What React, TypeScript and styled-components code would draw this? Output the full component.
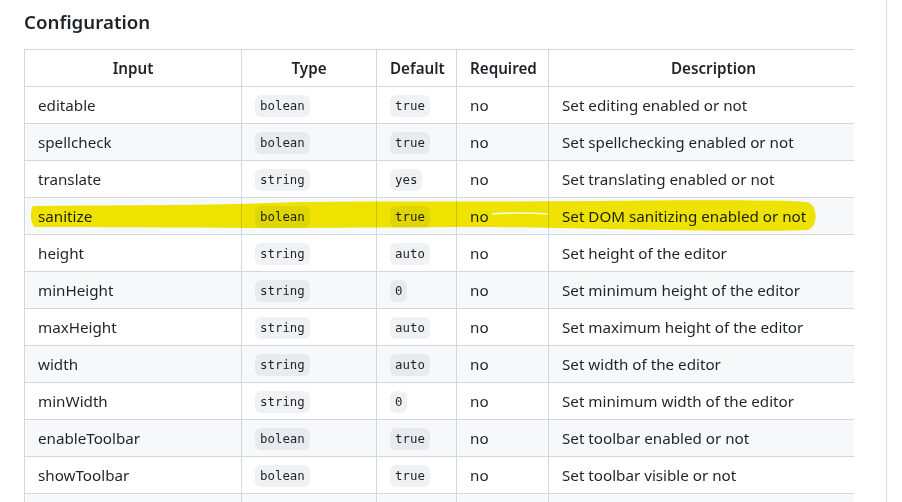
import React from "react";
import styled, { createGlobalStyle } from "styled-components";

const Global = createGlobalStyle`
  html, body { margin: 0; padding: 0; background: #ffffff; }
  body {
    font-family: "Noto Sans", "Open Sans", sans-serif;
    color: #1f2328;
    -webkit-font-smoothing: antialiased;
  }
`;

const Page = styled.div`
  position: relative;
  width: 902px;
  height: 502px;
  overflow: hidden;
  display: flex;
`;

const Main = styled.main`
  flex: none;
  width: 886px;
  padding: 0 32px 0 24px;
  box-sizing: border-box;
`;

const Aside = styled.aside`
  flex: 1;
  border-left: 1px solid #d8dee4;
`;

const Heading = styled.h3`
  margin: 9px 0 14px;
  font-size: 18.7px;
  line-height: 26px;
  font-weight: 600;
`;

const TableWrap = styled.div`
  width: 830px;
  overflow: hidden;
`;

const Table = styled.table`
  border-collapse: collapse;
  border-spacing: 0;
  table-layout: fixed;
  width: 854px;
  font-size: 15.2px;
  line-height: 24px;
`;

const HeadCell = styled.th`
  padding: 6px 13px;
  border: 1px solid #d0d7de;
  font-weight: 600;
  text-align: center;
  height: 24px;
  box-sizing: content-box;
  white-space: nowrap;
`;

const Row = styled.tr<{ $alt: boolean }>`
  height: 37px;
  background: ${(p) => (p.$alt ? "#f6f8fa" : "#ffffff")};
`;

const Cell = styled.td`
  padding: 0 13px;
  border: 1px solid #d0d7de;
  height: 36px;
  max-height: 36px;
  box-sizing: border-box;
  white-space: nowrap;
  overflow: hidden;
`;

const Code = styled.code`
  display: inline-block;
  vertical-align: middle;
  font-family: "DejaVu Sans Mono", "Liberation Mono", monospace;
  font-size: 12.4px;
  line-height: 16px;
  padding: 3px 5px;
  margin-top: -2px;
  border-radius: 6px;
  background: rgba(175, 184, 193, 0.2);
`;

const Marker = styled.svg`
  position: absolute;
  left: 0;
  top: 0;
  pointer-events: none;
`;

const rows: [string, string, string, string, string][] = [
  ["editable", "bolean", "true", "no", "Set editing enabled or not"],
  ["spellcheck", "bolean", "true", "no", "Set spellchecking enabled or not"],
  ["translate", "string", "yes", "no", "Set translating enabled or not"],
  ["sanitize", "bolean", "true", "no", "Set DOM sanitizing enabled or not"],
  ["height", "string", "auto", "no", "Set height of the editor"],
  ["minHeight", "string", "0", "no", "Set minimum height of the editor"],
  ["maxHeight", "string", "auto", "no", "Set maximum height of the editor"],
  ["width", "string", "auto", "no", "Set width of the editor"],
  ["minWidth", "string", "0", "no", "Set minimum width of the editor"],
  ["enableToolbar", "bolean", "true", "no", "Set toolbar enabled or not"],
  ["showToolbar", "bolean", "true", "no", "Set toolbar visible or not"],
];

export default function App() {
  return (
    <>
      <Global />
      <Page>
        <Main>
          <Heading>Configuration</Heading>
          <TableWrap>
            <Table>
              <colgroup>
                <col style={{ width: 217 }} />
                <col style={{ width: 135 }} />
                <col style={{ width: 80 }} />
                <col style={{ width: 92 }} />
                <col style={{ width: 330 }} />
              </colgroup>
              <thead>
                <tr>
                  <HeadCell>Input</HeadCell>
                  <HeadCell>Type</HeadCell>
                  <HeadCell>Default</HeadCell>
                  <HeadCell>Required</HeadCell>
                  <HeadCell>Description</HeadCell>
                </tr>
              </thead>
              <tbody>
                {rows.map((r, i) => (
                  <Row key={r[0]} $alt={i % 2 === 1}>
                    <Cell>{r[0]}</Cell>
                    <Cell>
                      <Code>{r[1]}</Code>
                    </Cell>
                    <Cell>
                      <Code>{r[2]}</Code>
                    </Cell>
                    <Cell>{r[3]}</Cell>
                    <Cell>{r[4]}</Cell>
                  </Row>
                ))}
                <Row $alt={true}>
                  <Cell />
                  <Cell />
                  <Cell />
                  <Cell />
                  <Cell />
                </Row>
              </tbody>
            </Table>
          </TableWrap>
        </Main>
        <Aside />
        <Marker width="902" height="502" viewBox="0 0 902 502">
          <path
            style={{ mixBlendMode: "multiply" }}
            fill="#f7e900"
            d="M33,206 C110,205 200,206 300,202 C400,201 500,202 600,201 C700,200 780,200 807,202 C818,204 819,228 807,230 C760,232 650,230 560,228 C480,226 380,228 300,228 C200,228 110,227 35,227 C30,225 30,209 33,206 Z"
          />
          <path d="M492,214 Q520,212 548,214" stroke="#ffffff" strokeWidth="1.6" fill="none" opacity="0.85" />
        </Marker>
      </Page>
    </>
  );
}
